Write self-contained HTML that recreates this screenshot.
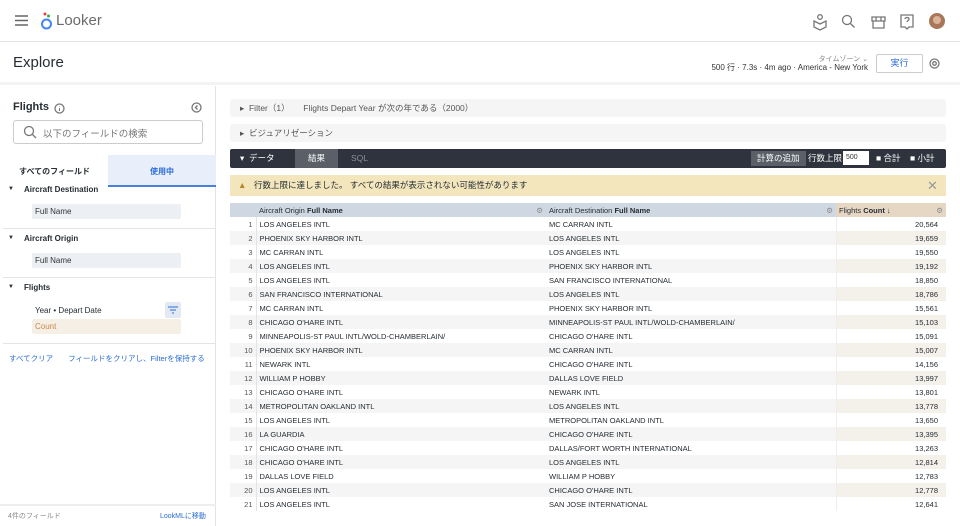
<!DOCTYPE html>
<html><head><meta charset="utf-8"><style>
*{box-sizing:border-box;margin:0;padding:0}
body{width:960px;height:526px;overflow:hidden;background:#fff;font-family:"Liberation Sans","Noto Sans CJK JP",sans-serif;color:#262d33;position:relative}
.abs{position:absolute}
.top{left:0;top:0;width:960px;height:42px;border-bottom:1px solid #e4e4e4}
.hdr{left:0;top:43px;width:960px;height:42px;border-bottom:3px solid #f3f3f3}
.left{left:0;top:86px;width:216px;height:440px;border-right:1px solid #e4e4e4}
.bar{left:230px;width:716px;height:18px;background:#f5f5f5;border-radius:3px;font-size:8.5px;color:#555;line-height:18px;padding-left:10px}
table{border-collapse:collapse;font-size:7.5px}
td{height:14px;padding:0 3px;white-space:nowrap}
.n{width:26px;text-align:right;color:#555;border-right:1px solid #e4e4e4}
.c{text-align:right;padding-right:8px}
.sec{font-size:8px;font-weight:bold;position:absolute;left:24px}
.tri{position:absolute;left:8px;font-size:6px}
.pill{position:absolute;left:32px;width:149px;height:15px;background:#eceff3;border-radius:2px;font-size:8px;line-height:15px;padding-left:3px;color:#333}
.ic{stroke:#777;fill:none;stroke-width:1.3}
</style></head><body>
<div class="abs top">
<svg class="abs" style="left:15px;top:15px" width="13" height="11"><path d="M0 1h13M0 5.5h13M0 10h13" stroke="#666" stroke-width="1.4"/></svg>
<svg class="abs" style="left:40px;top:12px" width="14" height="18"><circle cx="5" cy="2" r="1.5" fill="#ea4335"/><circle cx="8.5" cy="4" r="1.5" fill="#34a853"/><circle cx="6.5" cy="12" r="4.5" stroke="#4285f4" stroke-width="2" fill="none"/></svg>
<div class="abs" style="left:56px;top:12px;font-size:15px;color:#6b6b6b">Looker</div>
<svg class="abs" style="left:813px;top:13px" width="140" height="18">
<g class="ic"><circle cx="7" cy="4" r="2.3"/><path d="M1 8l6 3 6-3v6l-6 3-6-3z"/>
<circle cx="34" cy="7" r="4.5"/><path d="M37.5 10.5l4 4"/>
<path d="M59 4h13v4H59zM60 8v7h11V8M63 4v4M68 4v4"/>
<path d="M88 2h12v12h-4l-2 2-2-2h-4z"/><path d="M92 6c0-2 4-2 4 0s-2 1.5-2 3"/></g>
<circle cx="124" cy="8" r="8" fill="#a97758"/><circle cx="124" cy="7" r="4" fill="#d9b49a"/></svg>
</div>
<div class="abs hdr">
<div class="abs" style="left:13px;top:11px;font-size:15px;color:#262d33">Explore</div>
<div class="abs" style="right:92px;top:11px;font-size:7px;color:#888">タイムゾーン ⌄</div>
<div class="abs" style="right:92px;top:19px;font-size:8px;color:#333;white-space:nowrap">500 行 · 7.3s · 4m ago · America - New York</div>
<div class="abs" style="left:876px;top:11px;width:47px;height:19px;border:1px solid #ccc;border-radius:2px;color:#2a6cd6;font-size:9px;text-align:center;line-height:17px">実行</div>
<svg class="abs" style="left:928px;top:14px" width="13" height="13"><circle cx="6.5" cy="6.5" r="4.5" class="ic"/><circle cx="6.5" cy="6.5" r="1.8" class="ic"/></svg>
</div>
<div class="abs left">
<div class="abs" style="left:13px;top:15px;font-size:11px;font-weight:bold">Flights</div>
<svg class="abs" style="left:54px;top:17px" width="11" height="11"><circle cx="5.5" cy="5.5" r="4.5" class="ic" stroke-width="1"/><path d="M5.5 5v3M5.5 3.3v.5" stroke="#777"/></svg>
<svg class="abs" style="left:191px;top:16px" width="11" height="11"><circle cx="5.5" cy="5.5" r="4.5" class="ic" stroke-width="1"/><path d="M6.5 3.5l-2 2 2 2" class="ic" stroke-width="1"/></svg>
<div class="abs" style="left:13px;top:34px;width:190px;height:24px;border:1px solid #ccc;border-radius:3px"></div>
<svg class="abs" style="left:23px;top:39px" width="14" height="14"><circle cx="6" cy="6" r="4.5" class="ic"/><path d="M9.5 9.5l3.5 3.5" class="ic"/></svg>
<div class="abs" style="left:43px;top:40px;font-size:9.5px;color:#777">以下のフィールドの検索</div>
<div class="abs" style="left:108px;top:69px;width:108px;height:32px;background:#e8eefa;border-bottom:2px solid #4a7fe0"></div>
<div class="abs" style="left:19px;top:80px;font-size:8px;font-weight:bold">すべてのフィールド</div>
<div class="abs" style="left:150px;top:80px;font-size:8px;font-weight:bold;color:#2a6cd6">使用中</div>
<div class="tri" style="top:100px">▼</div><div class="sec" style="top:99px">Aircraft Destination</div>
<div class="pill" style="top:118px">Full Name</div>
<div class="abs" style="left:3px;top:142px;width:213px;border-top:1px solid #e4e4e4"></div>
<div class="tri" style="top:149px">▼</div><div class="sec" style="top:148px">Aircraft Origin</div>
<div class="pill" style="top:167px">Full Name</div>
<div class="abs" style="left:3px;top:191px;width:213px;border-top:1px solid #e4e4e4"></div>
<div class="tri" style="top:198px">▼</div><div class="sec" style="top:197px">Flights</div>
<div class="abs" style="left:35px;top:220px;font-size:8px">Year • Depart Date</div>
<div class="abs" style="left:165px;top:216px;width:16px;height:16px;background:#e3e9f2;border-radius:2px"></div>
<svg class="abs" style="left:168px;top:220px" width="10" height="8"><path d="M0 1h10M2 4h6M4 7h2" stroke="#2a6cd6"/></svg>
<div class="pill" style="top:233px;background:#f6efe6;color:#c9894a">Count</div>
<div class="abs" style="left:3px;top:257px;width:213px;border-top:1px solid #e4e4e4"></div>
<div class="abs" style="left:9px;top:267px;font-size:7.5px;color:#2a6cd6">すべてクリア　　フィールドをクリアし、Filterを保持する</div>
<div class="abs" style="left:0;top:418px;width:216px;border-top:2px solid #eee"></div>
<div class="abs" style="left:8px;top:425px;font-size:7px;color:#888">4件のフィールド</div>
<div class="abs" style="left:160px;top:425px;font-size:7px;color:#2a6cd6">LookMLに移動</div>
</div>
<div class="abs bar" style="top:99px">▸ &nbsp;Filter（1）　&nbsp;&nbsp;&nbsp;&nbsp;Flights Depart Year が次の年である（2000）</div>
<div class="abs bar" style="top:124px">▸ &nbsp;ビジュアリゼーション</div>
<div class="abs" style="left:230px;top:149px;width:716px;height:19px;background:#2e333d;border-radius:2px;color:#fff;font-size:8.5px;line-height:19px">
<span class="abs" style="left:10px">▾ &nbsp;データ</span>
<span class="abs" style="left:65px;width:43px;height:19px;background:#5a5f68;text-align:center">結果</span>
<span class="abs" style="left:121px;color:#8a8f98">SQL</span>
<span class="abs" style="left:521px;top:2px;height:15px;line-height:15px;padding:0 6px;background:#5a5f68">計算の追加</span>
<span class="abs" style="left:578px">行数上限</span>
<span class="abs" style="left:613px;top:2px;width:26px;height:14px;background:#fff;color:#333;line-height:14px;padding-left:3px;font-size:7px">500</span>
<span class="abs" style="left:646px">■ 合計</span><span class="abs" style="left:680px">■ 小計</span>
</div>
<div class="abs" style="left:230px;top:175px;width:716px;height:21px;background:#f3e6bd;font-size:8.5px;line-height:21px">
<span class="abs" style="left:8px;color:#b5862b">▲</span><span class="abs" style="left:24px">行数上限に達しました。 すべての結果が表示されない可能性があります</span>
<span class="abs" style="left:697px;color:#999;font-size:13px">✕</span></div>
<table class="abs" style="left:230px;top:203px;width:716px">
<tr style="background:#cfd8e2"><td style="width:26px"></td><td style="width:290px">Aircraft Origin <b>Full Name</b><span style="float:right;color:#888">⚙</span></td><td style="width:290px">Aircraft Destination <b>Full Name</b><span style="float:right;color:#888">⚙</span></td><td style="background:#e6d7c4">Flights <b>Count</b> ↓<span style="float:right;color:#888">⚙</span></td></tr>
<tbody id="tb"></tbody></table>
<script>
var d=[["LOS ANGELES INTL","MC CARRAN INTL","20,564"],["PHOENIX SKY HARBOR INTL","LOS ANGELES INTL","19,659"],["MC CARRAN INTL","LOS ANGELES INTL","19,550"],["LOS ANGELES INTL","PHOENIX SKY HARBOR INTL","19,192"],["LOS ANGELES INTL","SAN FRANCISCO INTERNATIONAL","18,850"],["SAN FRANCISCO INTERNATIONAL","LOS ANGELES INTL","18,786"],["MC CARRAN INTL","PHOENIX SKY HARBOR INTL","15,561"],["CHICAGO O'HARE INTL","MINNEAPOLIS-ST PAUL INTL/WOLD-CHAMBERLAIN/","15,103"],["MINNEAPOLIS-ST PAUL INTL/WOLD-CHAMBERLAIN/","CHICAGO O'HARE INTL","15,091"],["PHOENIX SKY HARBOR INTL","MC CARRAN INTL","15,007"],["NEWARK INTL","CHICAGO O'HARE INTL","14,156"],["WILLIAM P HOBBY","DALLAS LOVE FIELD","13,997"],["CHICAGO O'HARE INTL","NEWARK INTL","13,801"],["METROPOLITAN OAKLAND INTL","LOS ANGELES INTL","13,778"],["LOS ANGELES INTL","METROPOLITAN OAKLAND INTL","13,650"],["LA GUARDIA","CHICAGO O'HARE INTL","13,395"],["CHICAGO O'HARE INTL","DALLAS/FORT WORTH INTERNATIONAL","13,263"],["CHICAGO O'HARE INTL","LOS ANGELES INTL","12,814"],["DALLAS LOVE FIELD","WILLIAM P HOBBY","12,783"],["LOS ANGELES INTL","CHICAGO O'HARE INTL","12,778"],["LOS ANGELES INTL","SAN JOSE INTERNATIONAL","12,641"]];
var h="";d.forEach(function(r,i){var g=i%2==1;h+='<tr style="background:'+(g?'#f5f5f5':'#fff')+'"><td class="n">'+(i+1)+'</td><td>'+r[0]+'</td><td style="border-right:1px solid #eee">'+r[1]+'</td><td class="c" style="background:'+(g?'#f4f0ea':'#fff')+'">'+r[2]+'</td></tr>'});document.getElementById("tb").innerHTML=h;
</script>
</body></html>
